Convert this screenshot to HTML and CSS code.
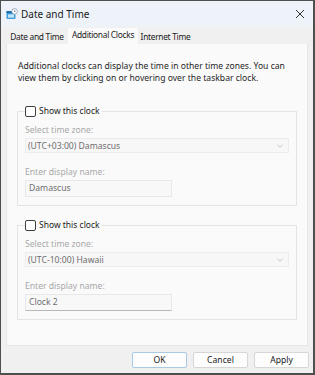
FILE: index.html
```html
<!DOCTYPE html>
<html>
<head>
<title>Date and Time</title>
<link rel="stylesheet" href="styles.css">
</head>
<body>
<div class="window">
	<div class="titlebar">
		<svg class="app_icon" width="12" height="12" viewBox="0 0 12 12">
			<rect x="0.5" y="3" width="9" height="8" rx="1" fill="#3f9fd8"/>
			<rect x="0.5" y="3" width="9" height="2.2" fill="#1b6fb3"/>
			<rect x="2" y="6.3" width="6" height="3.4" fill="#bfe3f7"/>
			<circle cx="8.6" cy="3.4" r="2.8" fill="#ffffff" stroke="#7a8da0" stroke-width="0.7"/>
			<path d="M8.6 2 V3.5 H9.7" fill="none" stroke="#41566b" stroke-width="0.6"/>
		</svg>
		<div class="title_text">Date and Time</div>
		<svg class="close_icon" width="10" height="10" viewBox="0 0 10 10">
			<path d="M1 1 L9 9 M9 1 L1 9" stroke="#333" stroke-width="1"/>
		</svg>
	</div>
	<div class="tab_row">
		<div class="tab tab_date">Date and Time</div>
		<div class="tab tab_active">Additional Clocks</div>
		<div class="tab tab_inet">Internet Time</div>
	</div>
	<div class="panel">
		<div class="intro">Additional clocks can display the time in other time zones. You can view them by clicking on or hovering over the taskbar clock.</div>
		<fieldset class="clock_group">
			<legend><span class="check_box"></span>Show this clock</legend>
			<div class="field_label">Select time zone:</div>
			<div class="zone_select"><span>(UTC+03:00) Damascus</span>
				<svg width="6" height="4" viewBox="0 0 6 4"><path d="M0.5 0.8 L3 3.2 L5.5 0.8" fill="none" stroke="#b5b5b5" stroke-width="0.8"/></svg>
			</div>
			<div class="field_label label_name">Enter display name:</div>
			<div class="name_edit">Damascus</div>
		</fieldset>
		<fieldset class="clock_group group_two">
			<legend><span class="check_box"></span>Show this clock</legend>
			<div class="field_label">Select time zone:</div>
			<div class="zone_select"><span>(UTC-10:00) Hawaii</span>
				<svg width="6" height="4" viewBox="0 0 6 4"><path d="M0.5 0.8 L3 3.2 L5.5 0.8" fill="none" stroke="#b5b5b5" stroke-width="0.8"/></svg>
			</div>
			<div class="field_label label_name">Enter display name:</div>
			<div class="name_edit name_focus">Clock 2</div>
		</fieldset>
	</div>
	<div class="button_row">
		<button class="dlg_btn btn_default">OK</button>
		<button class="dlg_btn">Cancel</button>
		<button class="dlg_btn">Apply</button>
	</div>
</div>
</body>
</html>
```

FILE: styles.css
```css
body
{
	margin : 0;
	background-color : #ffffff;
	font-family : "Noto Sans", "Open Sans", sans-serif;
	color : #1f1f1f;
}
.window
{
	width : 315px;
	height : 375px;
	box-sizing : border-box;
	border : 1px solid #4f4f4f;
	border-right-width : 2px;
	border-bottom-width : 2px;
	background-color : #f0f0f0;
	display : flex;
	flex-direction : column;
}
.titlebar
{
	height : 26px;
	flex : none;
	background-color : #eef3f9;
	display : flex;
	align-items : center;
	padding : 0 8px 0 5px;
}
.app_icon
{
	margin-right : 3px;
}
.title_text
{
	flex : 1;
	font-size : 10px;
	color : #1a1a1a;
}
.tab_row
{
	display : flex;
	align-items : flex-end;
	height : 16px;
	margin-top : 1px;
	padding-left : 5px;
	flex : none;
}
.tab
{
	font-size : 8.4px;
	letter-spacing : -0.3px;
	height : 14px;
	line-height : 14px;
	text-align : center;
	color : #1a1a1a;
	white-space : nowrap;
}
.tab_date
{
	width : 62px;
}
.tab_inet
{
	width : 55px;
}
.tab_active
{
	width : 70px;
	height : 16px;
	line-height : 14px;
	background-color : #fafafa;
}
.panel
{
	flex : none;
	height : 302px;
	box-sizing : border-box;
	margin : 0 5px 0 5px;
	background-color : #fafafa;
	border : 1px solid #e6e6e6;
	border-top : none;
	padding : 16px 10px 0 10px;
}
.intro
{
	font-size : 8.6px;
	line-height : 12px;
	margin-left : 1px;
	color : #1f1f1f;
}
.clock_group
{
	margin : 21px 0 0 0;
	padding : 0 7px 8px 7px;
	border : 1px solid #e4e4e4;
	min-width : 0;
}
.group_two
{
	margin-top : 13px;
}
legend
{
	padding : 0 2px 0 0;
	font-size : 8.5px;
	line-height : 12px;
	display : flex;
	align-items : center;
	color : #1a1a1a;
}
.check_box
{
	width : 9px;
	height : 9px;
	border : 1px solid #404040;
	border-radius : 2px;
	background-color : #ffffff;
	margin-right : 3px;
}
.field_label
{
	font-size : 8.6px;
	line-height : 12px;
	margin-top : 7px;
	color : #a8a8a8;
}
.label_name
{
	margin-top : 13px;
}
.zone_select
{
	margin-top : 2px;
	height : 15px;
	box-sizing : border-box;
	border : 1px solid #ececec;
	background-color : #f7f7f7;
	display : flex;
	align-items : center;
	justify-content : space-between;
	padding : 0 5px 0 2px;
	font-size : 8.6px;
	color : #6e6e6e;
}
.name_edit
{
	margin-top : 2px;
	width : 147px;
	height : 17px;
	box-sizing : border-box;
	border : 1px solid #e8e8e8;
	background-color : #f8f8f8;
	padding : 0 3px;
	font-size : 8.6px;
	line-height : 15px;
	color : #6e6e6e;
}
.name_focus
{
	border-bottom-color : #b8b8b8;
}
.button_row
{
	display : flex;
	justify-content : flex-end;
	gap : 6px;
	padding : 6px 4px 0 0;
}
.dlg_btn
{
	width : 55px;
	height : 16px;
	padding : 0;
	font-family : "Noto Sans", "Open Sans", sans-serif;
	font-size : 8.6px;
	color : #1a1a1a;
	background-color : #fdfdfd;
	border : 1px solid #d6d6d6;
	border-radius : 2px;
}
.btn_default
{
	border-color : #a9c9e8;
}
```
